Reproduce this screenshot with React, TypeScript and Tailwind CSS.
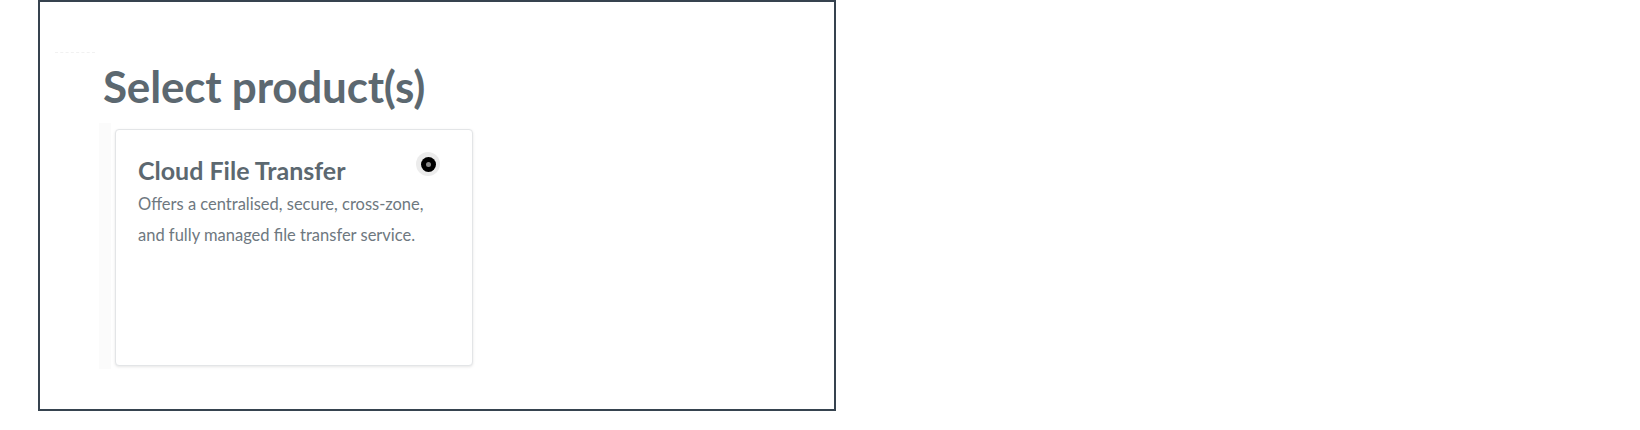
import React from 'react';

const RadioDot = () => (
  <span className="flex items-center justify-center w-[24px] h-[24px] rounded-full bg-[#ececec]">
    <span className="flex items-center justify-center w-[15px] h-[15px] rounded-full bg-black">
      <span className="w-[5px] h-[5px] rounded-full bg-[#8a8a8a]" />
    </span>
  </span>
);

const ProductCard = ({ title, text }: { title: string; text: string }) => (
  <div className="w-[358px] h-[237px] bg-white border border-[#e3e5e7] rounded-[4px] shadow-[0_1px_3px_rgba(0,0,0,0.10)] px-[22px] pt-[25px]">
    <div className="flex items-start justify-between">
      <h2 className="text-[25px] font-bold leading-[30px] text-[#5c6870]">{title}</h2>
      <div className="mr-[10px] mt-[-3px]">
        <RadioDot />
      </div>
    </div>
    <p className="mt-[4px] text-[16.5px] leading-[31px] text-[#6e7880] w-[310px]">{text}</p>
  </div>
);

const App: React.FC = () => {
  return (
    <div className="w-[1640px] h-[430px] bg-white" style={{ fontFamily: '"Source Sans Pro", Lato, "Open Sans", sans-serif' }}>
      <div className="ml-[38px] w-[798px] h-[411px] border-2 border-[#36434f] bg-white pt-[50px] pl-[15px]">
        <div className="border-t border-dashed border-[#f1f1f1] w-[40px]" />
        <div className="pl-[48px] mt-[8px]">
          <h1 className="text-[44px] font-bold leading-[50px] text-[#5c6870] tracking-[-0.2px]">Select product(s)</h1>
        </div>
        <div className="flex mt-[18px] pl-[44px]">
          <div className="w-[12px] h-[246px] bg-[#fbfbfb] mt-[-6px]" />
          <div className="ml-[4px]">
            <ProductCard
              title="Cloud File Transfer"
              text="Offers a centralised, secure, cross-zone, and fully managed file transfer service."
            />
          </div>
        </div>
      </div>
    </div>
  );
};

export default App;
